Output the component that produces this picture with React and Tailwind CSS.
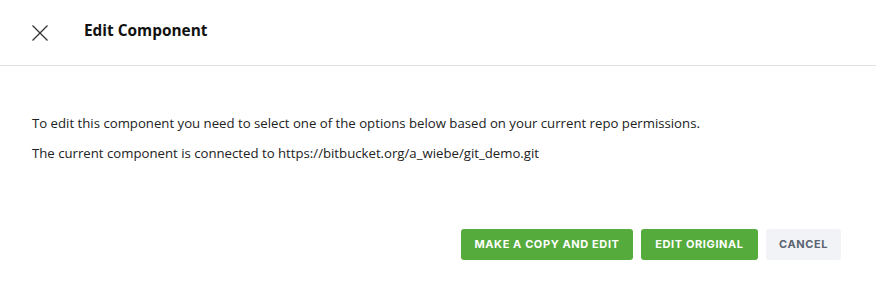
import React from "react";

const Dialog = () => {
  return (
    <div className="w-[876px] h-[291px] bg-white font-['Open_Sans',sans-serif] text-[#1f1f1f]">
      {/* header */}
      <div className="h-[66px] flex items-center border-b border-[#e3e3e3] pl-[31px]">
        <button className="w-[18px] h-[18px] flex items-center justify-center text-[#333]">
          <svg width="18" height="18" viewBox="0 0 18 18" fill="none">
            <path d="M1.5 1.5 L16.5 16.5 M16.5 1.5 L1.5 16.5" stroke="currentColor" strokeWidth="1.3" />
          </svg>
        </button>
        <h1 className="ml-[35px] text-[15.4px] font-bold text-[#111] mb-[4px]">Edit Component</h1>
      </div>

      {/* body */}
      <div className="px-[32px] pt-[47px] text-[13.2px] leading-[20px] text-[#222]">
        <p>To edit this component you need to select one of the options below based on your current repo permissions.</p>
        <p className="mt-[10px]">The current component is connected to https://bitbucket.org/a_wiebe/git_demo.git</p>
      </div>

      {/* actions */}
      <div className="flex justify-end gap-[8px] pr-[35px] mt-[66px] font-['Inter',sans-serif] text-[11px] font-bold tracking-[0.6px]">
        <button className="h-[31px] w-[172px] rounded-[3px] bg-[#56ab3d] text-white">MAKE A COPY AND EDIT</button>
        <button className="h-[31px] w-[117px] rounded-[3px] bg-[#56ab3d] text-white">EDIT ORIGINAL</button>
        <button className="h-[31px] w-[75px] rounded-[3px] bg-[#f1f3f6] text-[#5b6472]">CANCEL</button>
      </div>
    </div>
  );
};

export default function App() {
  return <Dialog />;
}
